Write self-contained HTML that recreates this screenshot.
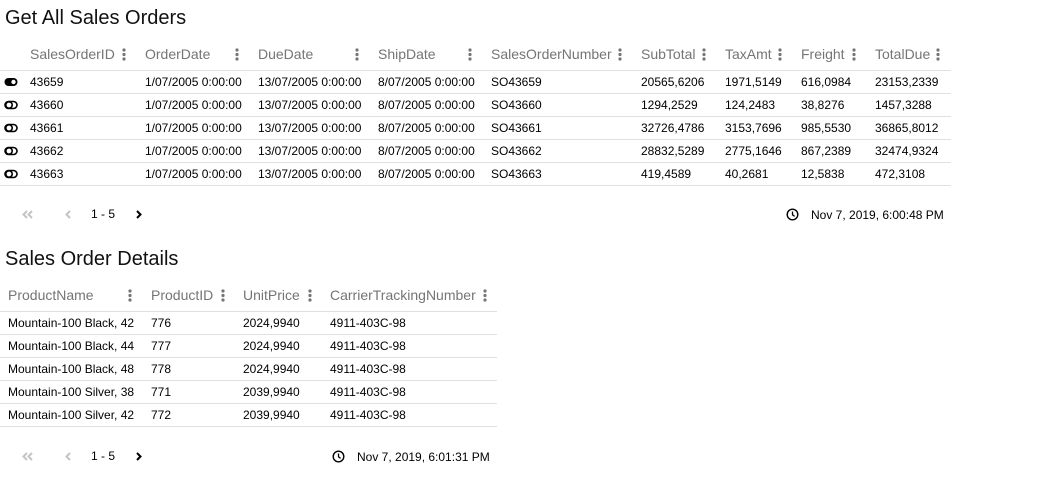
<!DOCTYPE html>
<html><head><meta charset="utf-8"><style>
*{margin:0;padding:0;box-sizing:border-box}
body{width:1058px;height:499px;background:#fff;font-family:"Liberation Sans",Arial,sans-serif;color:#000;position:relative;overflow:hidden}
.a{position:absolute;white-space:nowrap}
.t{font-size:20px;color:#111;line-height:24px}
table{position:absolute;border-collapse:collapse;table-layout:fixed}
th{font-weight:normal;font-size:14px;color:#757575;text-align:left;height:32px;border-bottom:1px solid #e0e0e0;white-space:nowrap;position:relative}
td{font-size:12px;height:23px;border-bottom:1px solid #e0e0e0;white-space:nowrap;padding:0}
.k{position:absolute;top:10px}
.pg{font-size:12px}
</style></head><body>
<div class="a t" style="left:5px;top:6px">Get All Sales Orders</div>
<table style="left:0;top:38px;width:951px">
<colgroup><col style="width:30px"><col style="width:115px"><col style="width:113px"><col style="width:120px"><col style="width:113px"><col style="width:150px"><col style="width:84px"><col style="width:76px"><col style="width:74px"><col style="width:76px"></colgroup>
<tr><th></th>
<th>SalesOrderID<svg class="k" style="left:92px" width="4" height="13"><circle cx="2" cy="2" r="1.6" fill="#757575"/><circle cx="2" cy="6.5" r="1.6" fill="#757575"/><circle cx="2" cy="11" r="1.6" fill="#757575"/></svg></th>
<th>OrderDate<svg class="k" style="left:90px" width="4" height="13"><circle cx="2" cy="2" r="1.6" fill="#757575"/><circle cx="2" cy="6.5" r="1.6" fill="#757575"/><circle cx="2" cy="11" r="1.6" fill="#757575"/></svg></th>
<th>DueDate<svg class="k" style="left:97px" width="4" height="13"><circle cx="2" cy="2" r="1.6" fill="#757575"/><circle cx="2" cy="6.5" r="1.6" fill="#757575"/><circle cx="2" cy="11" r="1.6" fill="#757575"/></svg></th>
<th>ShipDate<svg class="k" style="left:90px" width="4" height="13"><circle cx="2" cy="2" r="1.6" fill="#757575"/><circle cx="2" cy="6.5" r="1.6" fill="#757575"/><circle cx="2" cy="11" r="1.6" fill="#757575"/></svg></th>
<th>SalesOrderNumber<svg class="k" style="left:127px" width="4" height="13"><circle cx="2" cy="2" r="1.6" fill="#757575"/><circle cx="2" cy="6.5" r="1.6" fill="#757575"/><circle cx="2" cy="11" r="1.6" fill="#757575"/></svg></th>
<th>SubTotal<svg class="k" style="left:61px" width="4" height="13"><circle cx="2" cy="2" r="1.6" fill="#757575"/><circle cx="2" cy="6.5" r="1.6" fill="#757575"/><circle cx="2" cy="11" r="1.6" fill="#757575"/></svg></th>
<th>TaxAmt<svg class="k" style="left:53px" width="4" height="13"><circle cx="2" cy="2" r="1.6" fill="#757575"/><circle cx="2" cy="6.5" r="1.6" fill="#757575"/><circle cx="2" cy="11" r="1.6" fill="#757575"/></svg></th>
<th>Freight<svg class="k" style="left:51px" width="4" height="13"><circle cx="2" cy="2" r="1.6" fill="#757575"/><circle cx="2" cy="6.5" r="1.6" fill="#757575"/><circle cx="2" cy="11" r="1.6" fill="#757575"/></svg></th>
<th>TotalDue<svg class="k" style="left:61px" width="4" height="13"><circle cx="2" cy="2" r="1.6" fill="#757575"/><circle cx="2" cy="6.5" r="1.6" fill="#757575"/><circle cx="2" cy="11" r="1.6" fill="#757575"/></svg></th></tr>
<tr><td><svg style="margin-left:4px;vertical-align:middle" width="15" height="10"><rect x="0.5" y="1" width="13" height="8" rx="4" fill="#000"/><circle cx="9.5" cy="5" r="2.2" fill="#fff"/></svg></td><td>43659</td><td>1/07/2005 0:00:00</td><td>13/07/2005 0:00:00</td><td>8/07/2005 0:00:00</td><td>SO43659</td><td>20565,6206</td><td>1971,5149</td><td>616,0984</td><td>23153,2339</td></tr>
<tr><td><svg style="margin-left:4px;vertical-align:middle" width="15" height="10"><rect x="1" y="1.5" width="12" height="7" rx="3.5" fill="none" stroke="#000" stroke-width="1.6"/><circle cx="5" cy="5" r="3.2" fill="none" stroke="#000" stroke-width="1.6"/></svg></td><td>43660</td><td>1/07/2005 0:00:00</td><td>13/07/2005 0:00:00</td><td>8/07/2005 0:00:00</td><td>SO43660</td><td>1294,2529</td><td>124,2483</td><td>38,8276</td><td>1457,3288</td></tr>
<tr><td><svg style="margin-left:4px;vertical-align:middle" width="15" height="10"><rect x="1" y="1.5" width="12" height="7" rx="3.5" fill="none" stroke="#000" stroke-width="1.6"/><circle cx="5" cy="5" r="3.2" fill="none" stroke="#000" stroke-width="1.6"/></svg></td><td>43661</td><td>1/07/2005 0:00:00</td><td>13/07/2005 0:00:00</td><td>8/07/2005 0:00:00</td><td>SO43661</td><td>32726,4786</td><td>3153,7696</td><td>985,5530</td><td>36865,8012</td></tr>
<tr><td><svg style="margin-left:4px;vertical-align:middle" width="15" height="10"><rect x="1" y="1.5" width="12" height="7" rx="3.5" fill="none" stroke="#000" stroke-width="1.6"/><circle cx="5" cy="5" r="3.2" fill="none" stroke="#000" stroke-width="1.6"/></svg></td><td>43662</td><td>1/07/2005 0:00:00</td><td>13/07/2005 0:00:00</td><td>8/07/2005 0:00:00</td><td>SO43662</td><td>28832,5289</td><td>2775,1646</td><td>867,2389</td><td>32474,9324</td></tr>
<tr><td><svg style="margin-left:4px;vertical-align:middle" width="15" height="10"><rect x="1" y="1.5" width="12" height="7" rx="3.5" fill="none" stroke="#000" stroke-width="1.6"/><circle cx="5" cy="5" r="3.2" fill="none" stroke="#000" stroke-width="1.6"/></svg></td><td>43663</td><td>1/07/2005 0:00:00</td><td>13/07/2005 0:00:00</td><td>8/07/2005 0:00:00</td><td>SO43663</td><td>419,4589</td><td>40,2681</td><td>12,5838</td><td>472,3108</td></tr>
</table>

<svg class="a" style="left:22px;top:210px" width="12" height="9"><path d="M5 1L1.5 4.5L5 8M10 1L6.5 4.5L10 8" fill="none" stroke="#c4c4c4" stroke-width="2"/></svg>
<svg class="a" style="left:65px;top:210px" width="6" height="9"><path d="M5 1L1.5 4.5L5 8" fill="none" stroke="#c4c4c4" stroke-width="2"/></svg>
<div class="a pg" style="left:91px;top:207px">1 - 5</div>
<svg class="a" style="left:136px;top:210px" width="6" height="9"><path d="M1 1L4.5 4.5L1 8" fill="none" stroke="#000" stroke-width="2"/></svg>
<svg class="a" style="left:786px;top:208px" width="13" height="13"><circle cx="6.5" cy="6.5" r="5.3" fill="none" stroke="#000" stroke-width="1.4"/><path d="M6.5 3.5V6.8L8.6 8.4" fill="none" stroke="#000" stroke-width="1.3"/></svg>
<div class="a pg" style="left:811px;top:208px">Nov 7, 2019, 6:00:48 PM</div>

<div class="a t" style="left:5px;top:247px">Sales Order Details</div>
<table style="left:0;top:279px;width:497px">
<colgroup><col style="width:143px"><col style="width:92px"><col style="width:87px"><col style="width:175px"></colgroup>
<tr><th style="padding-left:8px">ProductName<svg class="k" style="left:128px" width="4" height="13"><circle cx="2" cy="2" r="1.6" fill="#757575"/><circle cx="2" cy="6.5" r="1.6" fill="#757575"/><circle cx="2" cy="11" r="1.6" fill="#757575"/></svg></th>
<th style="padding-left:8px">ProductID<svg class="k" style="left:78px" width="4" height="13"><circle cx="2" cy="2" r="1.6" fill="#757575"/><circle cx="2" cy="6.5" r="1.6" fill="#757575"/><circle cx="2" cy="11" r="1.6" fill="#757575"/></svg></th>
<th style="padding-left:8px">UnitPrice<svg class="k" style="left:73px" width="4" height="13"><circle cx="2" cy="2" r="1.6" fill="#757575"/><circle cx="2" cy="6.5" r="1.6" fill="#757575"/><circle cx="2" cy="11" r="1.6" fill="#757575"/></svg></th>
<th style="padding-left:8px">CarrierTrackingNumber<svg class="k" style="left:161px" width="4" height="13"><circle cx="2" cy="2" r="1.6" fill="#757575"/><circle cx="2" cy="6.5" r="1.6" fill="#757575"/><circle cx="2" cy="11" r="1.6" fill="#757575"/></svg></th></tr>
<tr><td style="padding-left:8px">Mountain-100 Black, 42</td><td style="padding-left:8px">776</td><td style="padding-left:8px">2024,9940</td><td style="padding-left:8px">4911-403C-98</td></tr>
<tr><td style="padding-left:8px">Mountain-100 Black, 44</td><td style="padding-left:8px">777</td><td style="padding-left:8px">2024,9940</td><td style="padding-left:8px">4911-403C-98</td></tr>
<tr><td style="padding-left:8px">Mountain-100 Black, 48</td><td style="padding-left:8px">778</td><td style="padding-left:8px">2024,9940</td><td style="padding-left:8px">4911-403C-98</td></tr>
<tr><td style="padding-left:8px">Mountain-100 Silver, 38</td><td style="padding-left:8px">771</td><td style="padding-left:8px">2039,9940</td><td style="padding-left:8px">4911-403C-98</td></tr>
<tr><td style="padding-left:8px">Mountain-100 Silver, 42</td><td style="padding-left:8px">772</td><td style="padding-left:8px">2039,9940</td><td style="padding-left:8px">4911-403C-98</td></tr>
</table>

<svg class="a" style="left:22px;top:452px" width="12" height="9"><path d="M5 1L1.5 4.5L5 8M10 1L6.5 4.5L10 8" fill="none" stroke="#c4c4c4" stroke-width="2"/></svg>
<svg class="a" style="left:65px;top:452px" width="6" height="9"><path d="M5 1L1.5 4.5L5 8" fill="none" stroke="#c4c4c4" stroke-width="2"/></svg>
<div class="a pg" style="left:91px;top:449px">1 - 5</div>
<svg class="a" style="left:136px;top:452px" width="6" height="9"><path d="M1 1L4.5 4.5L1 8" fill="none" stroke="#000" stroke-width="2"/></svg>
<svg class="a" style="left:332px;top:450px" width="13" height="13"><circle cx="6.5" cy="6.5" r="5.3" fill="none" stroke="#000" stroke-width="1.4"/><path d="M6.5 3.5V6.8L8.6 8.4" fill="none" stroke="#000" stroke-width="1.3"/></svg>
<div class="a pg" style="left:357px;top:450px">Nov 7, 2019, 6:01:31 PM</div>
</body></html>
